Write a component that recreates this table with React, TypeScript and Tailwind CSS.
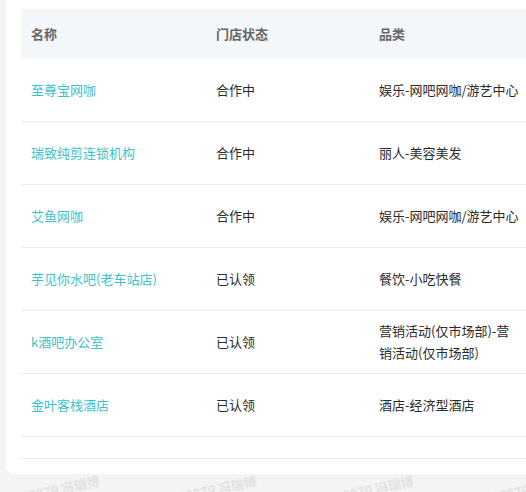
const ROWS = [
  { name: "至尊宝网咖", status: "合作中", category: "娱乐-网吧网咖/游艺中心" },
  { name: "瑞致纯剪连锁机构", status: "合作中", category: "丽人-美容美发" },
  { name: "艾鱼网咖", status: "合作中", category: "娱乐-网吧网咖/游艺中心" },
  { name: "芋见你水吧(老车站店)", status: "已认领", category: "餐饮-小吃快餐" },
  { name: "k酒吧办公室", status: "已认领", category: "营销活动(仅市场部)-营销活动(仅市场部)" },
  { name: "金叶客栈酒店", status: "已认领", category: "酒店-经济型酒店" },
];

const MARKS = [
  { left: 20, top: 478 },
  { left: 177, top: 478 },
  { left: 334, top: 478 },
  { left: 491, top: 478 },
];

export default function App() {
  return (
    <div
      className="relative h-[492px] w-[526px] overflow-hidden bg-[#f3f4f4] text-[13px] leading-[22px]"
      style={{ fontFamily: '"Noto Sans CJK SC", "Noto Sans", sans-serif' }}
    >
      <div className="ml-[6px] w-[620px] rounded-bl-lg bg-white pt-[9px] pb-[15px] pl-[15px]">
        {/* header */}
        <div className="grid h-[50px] grid-cols-[185px_163px_1fr] items-center bg-[#f4f7fa] font-semibold text-[#666]">
          <div className="px-[10px]">名称</div>
          <div className="px-[10px]">门店状态</div>
          <div className="px-[10px]">品类</div>
        </div>

        {ROWS.map((r) => (
          <div
            key={r.name}
            className="grid h-[63px] grid-cols-[185px_163px_1fr] items-center border-b border-[#ebebf2] text-[#2b2b2b]"
          >
            <div className="px-[10px] text-[#3cc3c9]">{r.name}</div>
            <div className="px-[10px]">{r.status}</div>
            <div className="w-[162px] px-[10px]">{r.category}</div>
          </div>
        ))}

        <div className="h-[22px] border-b border-[#ebebf2]" />
      </div>

      {/* watermark */}
      {MARKS.map((m, i) => (
        <span
          key={i}
          className="pointer-events-none absolute -rotate-[12deg] whitespace-nowrap text-[13px] font-bold text-[#e2e3e3]"
          style={{ left: m.left, top: m.top }}
        >
          16879 冯瑞博
        </span>
      ))}
    </div>
  );
}
